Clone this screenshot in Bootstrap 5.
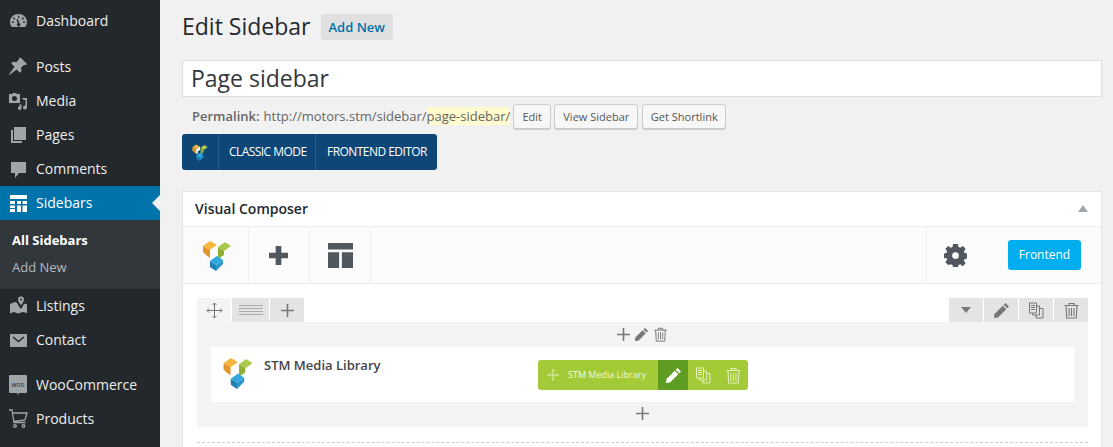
<!DOCTYPE html>
<html lang="en">
<head>
<meta charset="utf-8">
<title>Edit Sidebar</title>
<link href="https://cdn.jsdelivr.net/npm/bootstrap@5.3.0/dist/css/bootstrap.min.css" rel="stylesheet">
<style>
html,body{height:447px;overflow:hidden}
body{background:#f1f1f1;font-family:"Open Sans",sans-serif;color:#32373c;font-size:13px}
.wp-shell{height:447px;overflow:hidden}
.wp-side{width:160px;flex:none;background:#23282d;padding-top:4px}
.wp-item{height:34px;color:#eee;font-size:14px;padding-left:8px;gap:8px;text-decoration:none;position:relative}
.wp-item span{padding-bottom:2px}
.wp-item svg{width:20px;height:20px;flex:none;fill:#a0a5aa}
.wp-item:hover{color:#eee}
.wp-sep{margin-top:12px}
.wp-sep2{margin-top:11px}
.wp-active{background:#0073aa;color:#fff}
.wp-active svg{fill:#fff}
.wp-active::after{content:"";position:absolute;right:0;top:9px;border:8px solid transparent;border-right-color:#f1f1f1;border-left:0}
.wp-sub{background:#32373c;height:69px;padding:7px 0 0 12px;font-size:13px}
.wp-sub a{display:block;line-height:27px;color:#b4b9be;text-decoration:none}
.wp-sub a.cur{color:#fff;font-weight:700}
.wp-main{width:920px;margin-left:22px;flex:none}
.head-row{height:52px}
.page-h{font-size:23px;font-weight:400;margin:0;line-height:36px;color:#23282d}
.add-new{background:#e0e0e0;color:#0073aa;font-size:13px;font-weight:600;height:26px;line-height:26px;padding:0 8px;margin:2px 0 0 10px;text-decoration:none;border-radius:2px}
.title-box{height:37px;margin-top:8px;background:#fff;border:1px solid #ddd;font-size:23px;line-height:35px;padding:0 8px;color:#32373c}
.perma{height:25px;margin-top:7px;padding-left:10px;color:#666;font-size:13px;gap:3px}
.perma mark{background:#fffbcc;color:#666;padding:0}
.perma b{font-weight:600;margin-right:4px}
.mini{height:25px;line-height:23px;font-size:11px;padding:0 8px;background:#f7f7f7;border:1px solid #ccc;border-radius:3px;color:#555;box-shadow:0 1px 0 #ccc;text-align:center}
.mini-edit{width:38px}
.mini-view{width:84px}
.mini-last{margin-left:1px;width:84px;padding:0}
.vc-bar{width:255px;height:36px;margin-top:5px;background:#0e4677;border-radius:3px;color:#fff;font-size:12px;letter-spacing:-.55px}
.vc-bar>div{height:100%;display:flex;align-items:center;border-right:1px solid #2a5d8a}
.vc-bar>div:last-child{border:0}
.bar-logo{width:37px;padding-left:10px}
.bar-logo svg{width:16px;height:17px}
.bar-a{width:97px;padding-left:10px}
.bar-b{padding-left:11px}
.vc-panel{margin-top:21px;background:#fff;border:1px solid #e5e5e5;box-shadow:0 1px 1px rgba(0,0,0,.04)}
.vc-head{height:35px;padding:0 13px 2px 12px;border-bottom:1px solid #eee;font-size:14px;font-weight:600;color:#23282d}
.tri-up{width:0;height:0;border:5px solid transparent;border-top:0;border-bottom:7px solid #a0a5aa}
.vc-tools{height:57px;background:#fbfbfb;border-bottom:1px solid #eee}
.tool{height:100%;width:61px;border-right:1px solid #f0f0f0;display:flex;align-items:center;justify-content:center}
.tool-logo{width:66px;padding-left:3px}
.tool-plus{padding-right:1px}
.tool-left{border-right:0;border-left:1px solid #f0f0f0;width:61px;padding-right:4px}
.front{background:#00aef0;color:#fff;height:30px;line-height:30px;width:73px;text-align:center;border-radius:3px;font-size:12px;margin:0 20px 0 21px}
.vc-canvas{padding:14px 13px 0 14px;height:165px}
.row-ctl{height:24px;gap:1px}
.ctl{width:34px;height:24px;background:#e4e4e4;display:flex;align-items:center;justify-content:center}
.ctl svg{width:17px;height:17px}
.ctl-move{background:#f4f4f4}
.ctl-wide{width:37px}
.row-body{background:#f4f4f4;height:105px;padding:0 14px}
.icon-line{height:25px;gap:4px}
.icon-line svg{display:block}
.icon-low{padding-bottom:2px}
.elem-box{background:#fff;height:55px;padding-left:12px}
.elem-left{width:315px;padding-top:10px;gap:11px}
.elem-left svg{width:30px;height:32px;flex:none}
.elem-title{font-size:13px;font-weight:600;color:#444;line-height:18px;margin-top:-1px}
.green{height:30px;margin-top:13px;width:210px;background:#a3cb38;border-radius:3px;color:#f4f9dc;font-size:9px;overflow:hidden}
.green-name{width:120px;padding-left:9px;gap:9px}
.g-btn{width:30px;height:30px;display:flex;align-items:center;justify-content:center}
.g-on{background:#5f9c22}
.dash{margin-top:15px;border-top:1px dashed #ccc}
</style>
</head>
<body>
<div class="wp-shell d-flex">
  <nav class="wp-side">
    <a class="wp-item d-flex align-items-center" href="#"><svg viewBox="0 0 20 20"><path fill-rule="evenodd" d="M10.500 3C5.800 3 2 6.500 2 11c0 2 .7 3.700 1.800 5h13.400A7.800 7.800 0 0 0 19 11c0-4.500-3.800-8-8.500-8zM10 4.800h1.200V7H10zM5.800 6.300l1.500 1.500-.9.900-1.500-1.500zm9.500 0l.9.900-1.500 1.500-.9-.9zM3.700 10.500H6v1.200H3.700zm11.300 0h2.300v1.200H15zM8.500 8.300l1.500 0 1.200 3.800a1.700 1.700 0 1 1-1.500.2z"/></svg><span>Dashboard</span></a>
    <a class="wp-item wp-sep d-flex align-items-center" href="#"><svg viewBox="0 0 20 20"><path d="M13 1l6 6-1.500 1.300-1.200-.6-3.300 3 .6 3.300-1.800 1.700-3.200-3.200L1.500 18 1 17.500l5.500-7.700-3.300-3.300L5 4.700l3.300.6 3-3.300-.5-1.200z"/></svg><span>Posts</span></a>
    <a class="wp-item d-flex align-items-center" href="#"><svg viewBox="0 0 20 20"><path fill-rule="evenodd" d="M1 3h3l1-1h3l1 1h3v9H1zm5.500 2a2.500 2.500 0 1 0 0 5 2.500 2.500 0 0 0 0-5z"/><path d="M14 7h5v9.500a2 2 0 1 1-1.500-1.900V9H15.500zM11 13.500h2.500V17a1.800 1.800 0 1 1-1.500-1.700z"/></svg><span>Media</span></a>
    <a class="wp-item d-flex align-items-center" href="#"><svg viewBox="0 0 20 20"><path d="M6 2h12v13H6zM3 5h2v11h9v2H3z"/></svg><span>Pages</span></a>
    <a class="wp-item d-flex align-items-center" href="#"><svg viewBox="0 0 20 20"><path d="M3 3h15v11h-7l-4 5v-5H3z"/></svg><span>Comments</span></a>
    <a class="wp-item wp-active d-flex align-items-center" href="#"><svg viewBox="0 0 20 20"><path d="M2 2h17v4H2zM2 8h5v3H2zM2 12.500h5V15H2zM2 16h5v3H2zM9 8h4v3H9zM14.500 8H19v3h-4.500zM9 12.500h4V19H9zM14.500 12.500H19V19h-4.500z"/></svg><span>Sidebars</span></a>
    <div class="wp-sub"><a class="cur" href="#">All Sidebars</a><a href="#">Add New</a></div>
    <a class="wp-item d-flex align-items-center" href="#"><svg viewBox="0 0 20 20"><path fill-rule="evenodd" d="M13 .5a3 3 0 0 1 3 3c0 1.800-3 6-3 6s-3-4.200-3-6a3 3 0 0 1 3-3zm0 2a1 1 0 1 0 0 2 1 1 0 0 0 0-2z"/><path d="M2 8l5-2 2 .7c.8 1.800 2 4 4 6.300 1-1 2-3 3-5.500l3 1v8.500l-4-1-5 1.500-4-1.500-4 1.500z"/></svg><span>Listings</span></a>
    <a class="wp-item d-flex align-items-center" href="#"><svg viewBox="0 0 20 20"><path d="M2 4h17v13H2z"/><path d="M5 7l5.500 4.500L16 7" fill="none" stroke="#23282d" stroke-width="1.600"/></svg><span>Contact</span></a>
    <a class="wp-item wp-sep2 d-flex align-items-center" href="#"><svg viewBox="0 0 20 20"><path d="M2 0h16a1 1 0 0 1 1 1v16a1 1 0 0 1-1 1h-7l-1 2-1-2H2a1 1 0 0 1-1-1V1a1 1 0 0 1 1-1z"/><text x="10" y="11.500" text-anchor="middle" font-size="6.500" font-family="Open Sans,sans-serif" fill="#23282d">woo</text></svg><span>WooCommerce</span></a>
    <a class="wp-item d-flex align-items-center" href="#"><svg viewBox="0 0 20 20" style="fill:none;stroke:#a0a5aa;stroke-width:1.300"><path d="M1 1h3l2 12.500h11.500M4.500 4H19l-2 7-11 1.500"/><circle cx="7" cy="17" r="1.300"/><circle cx="15.500" cy="17" r="1.300"/></svg><span>Products</span></a>
  </nav>
  <main class="wp-main">
    <div class="head-row d-flex align-items-center"><h1 class="page-h">Edit Sidebar</h1><a class="add-new" href="#">Add New</a></div>
    <div class="title-box">Page sidebar</div>
    <div class="perma d-flex align-items-center"><span><b>Permalink:</b>http://motors.stm/sidebar/<mark>page-sidebar/</mark></span><span class="mini mini-edit">Edit</span><span class="mini mini-view">View Sidebar</span><span class="mini mini-last">Get Shortlink</span></div>
    <div class="vc-bar d-flex">
      <div class="bar-logo"><svg viewBox="0 0 28 31"><use href="#vclogo"/></svg></div>
      <div class="bar-a">CLASSIC MODE</div>
      <div class="bar-b">FRONTEND EDITOR</div>
    </div>
    <section class="vc-panel">
      <div class="vc-head d-flex align-items-center justify-content-between"><span>Visual Composer</span><span class="tri-up"></span></div>
      <div class="vc-tools d-flex">
        <div class="tool tool-logo"><svg width="28" height="31" viewBox="0 0 28 31"><defs><g id="vclogo">
          <polygon points="0,6 7,1 14,5 7,10" fill="#f5b83d"/><polygon points="0,6 7,10 7,18 3,15 0,12" fill="#e2952a"/><polygon points="7,10 14,5 14,11 10,13 10,18 7,18" fill="#fff"/>
          <polygon points="15,7 22,2 28,6 21,11" fill="#a9c94a"/><polygon points="15,7 21,11 21,15 15,19" fill="#8fb035"/>
          <polygon points="7,21 14,16 20,20 13,25" fill="#2fa8e0"/><polygon points="7,21 13,25 13,31 7,27" fill="#1f7fb0"/><polygon points="13,25 20,20 20,24 13,31" fill="#2b95cc"/>
        </g></defs><use href="#vclogo"/></svg></div>
        <div class="tool tool-plus"><svg width="19" height="19" viewBox="0 0 20 20"><path fill="#50575e" d="M7 0h6v7h7v6h-7v7H7v-7H0V7h7z"/></svg></div>
        <div class="tool"><svg width="25" height="25" viewBox="0 0 27 27"><path fill="#50575e" d="M0 0h27v7H0zM0 10h12v17H0zM15 10h12v17H15z"/></svg></div>
        <div class="flex-grow-1"></div>
        <div class="tool tool-left"><svg width="23" height="23" viewBox="0 0 24 24"><path fill="#50575e" fill-rule="evenodd" d="M9.500 0h5l.6 3.100 1.800.8L19.600 2l3 3-1.900 2.700.8 1.800 2.500.5v5l-2.500.6-.8 1.800 1.900 2.700-3 3-2.700-1.900-1.800.8-.6 2.900h-5l-.6-2.900-1.800-.8L4.400 22l-3-3 1.900-2.700-.8-1.800L0 14.900v-5l2.500-.5.800-1.800L1.400 5l3-3 2.700 1.900 1.800-.8zM12 8.500a3.500 3.500 0 1 0 0 7 3.500 3.500 0 0 0 0-7z"/></svg></div>
        <div class="d-flex align-items-center"><div class="front">Frontend</div></div>
      </div>
      <div class="vc-canvas">
        <div class="row-ctl d-flex">
          <div class="ctl ctl-move"><svg viewBox="0 0 17 17"><use href="#moveic" stroke="#777"/></svg></div>
          <div class="ctl ctl-wide"><svg viewBox="0 0 24 17" style="width:24px"><path stroke="#aaa" d="M0 3.500h24M0 6.500h24M0 9.500h24M0 12.500h24"/></svg></div>
          <div class="ctl"><svg viewBox="0 0 13 13" style="width:13px;height:13px"><path fill="#777" d="M5.700 0h1.600v5.700H13v1.600H7.300V13H5.700V7.300H0V5.700h5.700z"/></svg></div>
          <div class="flex-grow-1"></div>
          <div class="ctl"><span style="border:5px solid transparent;border-top:6px solid #777;border-bottom:0"></span></div>
          <div class="ctl"><svg viewBox="0 0 17 17"><use href="#pen" fill="#777"/></svg></div>
          <div class="ctl"><svg viewBox="0 0 17 17"><use href="#copy" stroke="#777"/></svg></div>
          <div class="ctl"><svg viewBox="0 0 17 17"><use href="#trash" stroke="#777"/></svg></div>
        </div>
        <div class="row-body">
          <div class="icon-line d-flex align-items-center justify-content-center">
            <svg width="13" height="13" viewBox="0 0 13 13"><path fill="#777" d="M5.700 0h1.600v5.700H13v1.600H7.300V13H5.700V7.300H0V5.700h5.700z"/></svg>
            <svg width="15" height="15" viewBox="0 0 17 17"><defs><g id="pen"><path d="M12.500 1l3.500 3.500-1.800 1.800-3.500-3.500zM9.800 3.700l3.500 3.500-8.300 8.300L1 16l.5-4z"/></g></defs><use href="#pen" fill="#777"/></svg>
            <svg width="15" height="15" viewBox="0 0 17 17"><defs><g id="trash" fill="none" stroke-width="1.100"><path d="M1.500 3.500h14M6 3.500V1.500h5v2M3 3.500l.7 12.500h9.600L14 3.500M6 6v8M8.500 6v8M11 6v8"/></g></defs><use href="#trash" stroke="#777"/></svg>
          </div>
          <div class="elem-box d-flex">
            <div class="elem-left d-flex"><svg viewBox="0 0 28 31"><use href="#vclogo"/></svg><span class="elem-title">STM Media Library</span></div>
            <div class="green d-flex align-items-center">
              <div class="green-name d-flex align-items-center"><svg width="12" height="12" viewBox="0 0 17 17"><defs><g id="moveic" fill="none" stroke-width="1"><path d="M8.500 1v15M1 8.500h15M6.500 3l2-2 2 2M6.500 14l2 2 2-2M3 6.500l-2 2 2 2M14 6.500l2 2-2 2"/></g></defs><use href="#moveic" stroke="#f4f9dc"/></svg><span>STM Media Library</span></div>
              <div class="g-btn g-on"><svg width="17" height="17" viewBox="0 0 17 17"><use href="#pen" fill="#fff"/></svg></div>
              <div class="g-btn"><svg width="17" height="17" viewBox="0 0 17 17"><defs><g id="copy" fill="none" stroke-width="1"><path d="M1.500 1h7v10h-7zM8.500 4h3v9h-7v-2M11.500 6.500h3.500V16H8v-3M3 3.500h4M3 5.500h4M3 7.500h4"/></g></defs><use href="#copy" stroke="#e4f0b8"/></svg></div>
              <div class="g-btn"><svg width="17" height="17" viewBox="0 0 17 17"><use href="#trash" stroke="#e4f0b8"/></svg></div>
            </div>
          </div>
          <div class="icon-line icon-low d-flex align-items-center justify-content-center"><svg width="13" height="13" viewBox="0 0 13 13"><path fill="#777" d="M5.700 0h1.600v5.700H13v1.600H7.300V13H5.700V7.300H0V5.700h5.700z"/></svg></div>
        </div>
        <div class="dash"></div>
      </div>
    </section>
  </main>
</div>
<script src="https://cdn.jsdelivr.net/npm/bootstrap@5.3.0/dist/js/bootstrap.bundle.min.js"></script>
</body>
</html>
